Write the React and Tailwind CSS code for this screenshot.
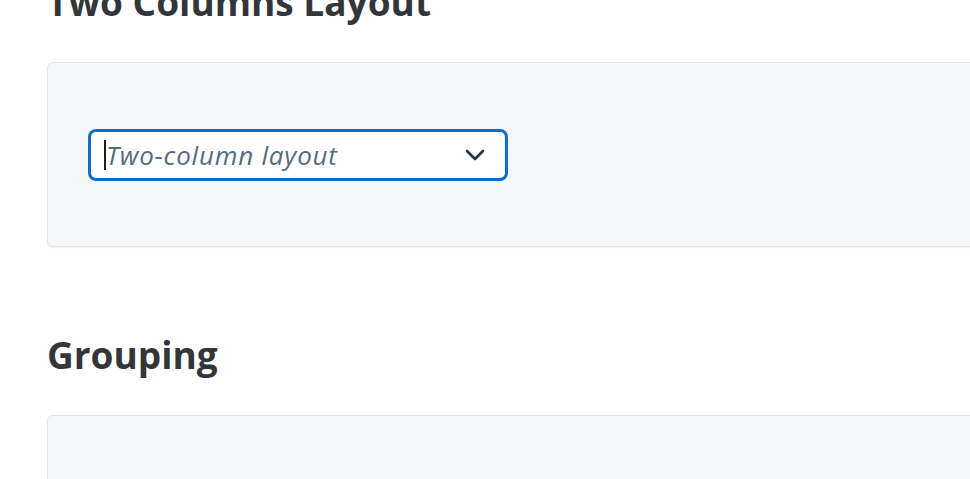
import { ChevronDown } from "lucide-react";

const FONT = { fontFamily: '"Open Sans", "Noto Sans", Arial, sans-serif' };

function Section({ title, children, first }) {
  return (
    <section className={first ? "-mt-[20px]" : "mt-[86px]"}>
      <h2 className="mb-[38px] text-[37px] font-bold leading-[44px] text-[#32363a]">
        {title}
      </h2>
      <div className="h-[185px] w-[960px] rounded-md border border-[#e1e4e8] bg-[#f5f6f7] shadow-[0_1px_2px_rgba(0,0,0,0.06)]">
        {children}
      </div>
    </section>
  );
}

export default function App() {
  return (
    <div
      className="h-[479px] w-[970px] overflow-hidden bg-white pl-[47px]"
      style={FONT}
    >
      <Section title="Two Columns Layout" first>
        <div className="pl-[40px] pt-[66px]">
          <div className="flex h-[52px] w-[420px] items-center rounded-[8px] border-[3px] border-[#0a6ed1] bg-white pl-[13px] pr-[14px]">
            <span className="h-[30px] w-[2px] bg-[#1d1d1d]" />
            <span className="flex-1 text-[26px] italic leading-none tracking-[0.8px] text-[#556b82]">
              Two-column layout
            </span>
            <ChevronDown className="h-8 w-8 text-[#223548]" strokeWidth={2} />
          </div>
        </div>
      </Section>
      <Section title="Grouping" />
    </div>
  );
}
